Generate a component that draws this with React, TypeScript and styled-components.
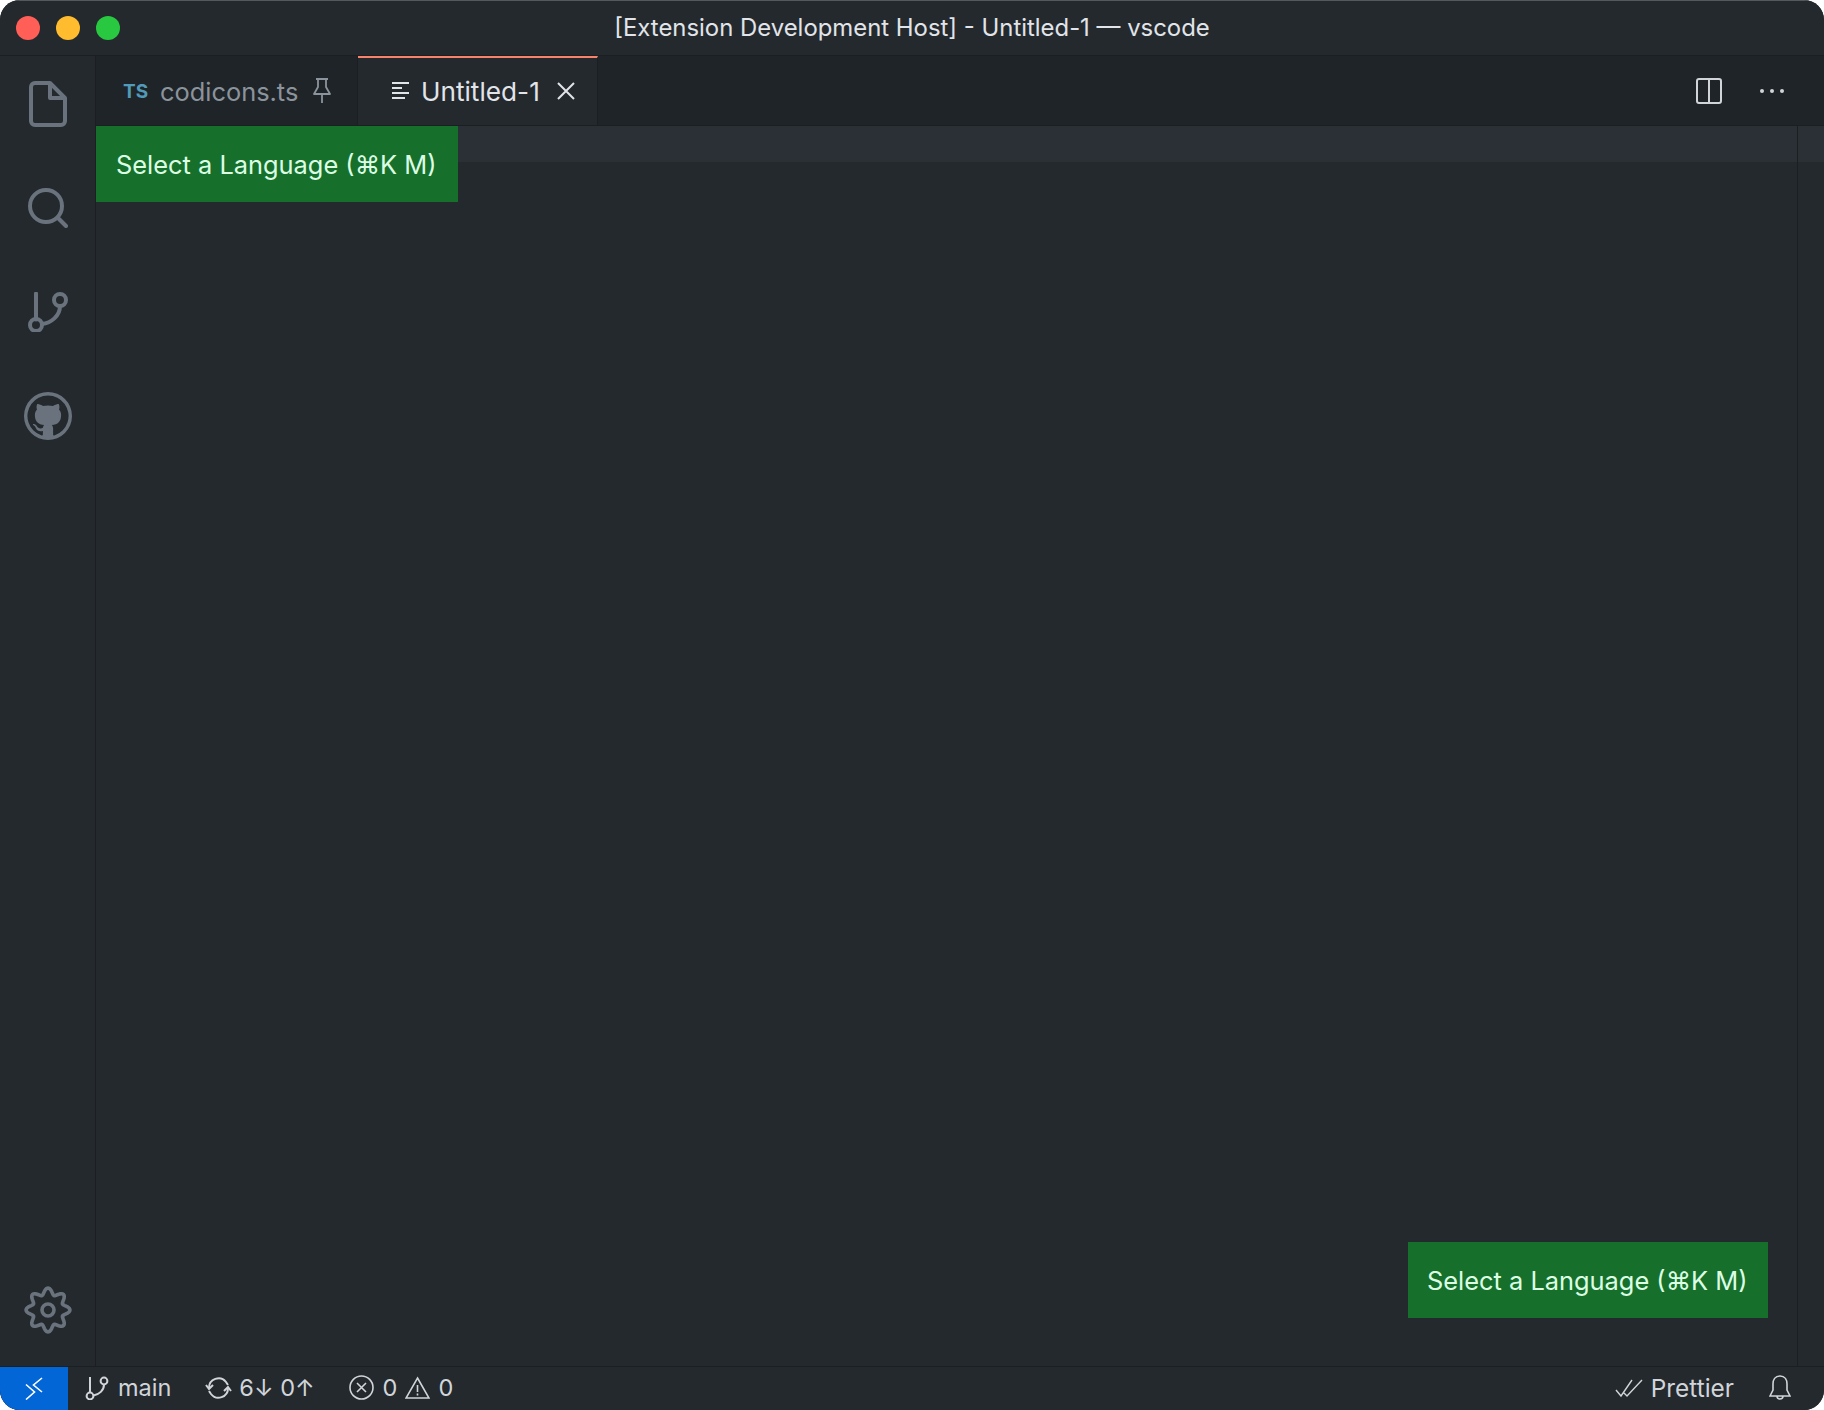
import styled, { createGlobalStyle } from "styled-components";
import { VscGithub } from "react-icons/vsc";

const GlobalStyle = createGlobalStyle`
  html, body {
    margin: 0;
    padding: 0;
    background: #fff;
  }
  * {
    box-sizing: border-box;
  }
`;

const Window = styled.div`
  position: relative;
  width: 1824px;
  height: 1410px;
  display: flex;
  flex-direction: column;
  overflow: hidden;
  border-radius: 20px;
  background: #24292e;
  font-family: Inter, "Noto Sans", "DejaVu Sans", sans-serif;
`;

const TitleBar = styled.div`
  height: 56px;
  flex: none;
  display: grid;
  grid-template-columns: 1fr auto 1fr;
  align-items: center;
  border-top: 1px solid #55595d;
  border-bottom: 1px solid #1b1f23;
  background: #24292e;
`;

const Lights = styled.div`
  display: flex;
  gap: 16px;
  padding-left: 16px;
`;

const Light = styled.span<{ color: string }>`
  width: 24px;
  height: 24px;
  border-radius: 50%;
  background: ${({ color }) => color};
`;

const Title = styled.div`
  font-size: 23.9px;
  color: #e1e4e8;
  white-space: nowrap;
  padding-bottom: 2px;
`;

const Main = styled.div`
  flex: 1;
  display: flex;
  min-height: 0;
`;

const ActivityBar = styled.div`
  width: 96px;
  flex: none;
  display: flex;
  flex-direction: column;
  align-items: center;
  gap: 56px;
  padding: 24px 0 32px;
  border-right: 1px solid #1b1f23;
  background: #24292e;
`;

const ActivityIcon = styled.div<{ $bottom?: boolean }>`
  width: 48px;
  height: 48px;
  display: flex;
  align-items: center;
  justify-content: center;
  color: #6a737d;
  margin-top: ${({ $bottom }) => ($bottom ? "auto" : "0")};
`;

const Content = styled.div`
  position: relative;
  flex: 1;
  min-width: 0;
  display: flex;
  flex-direction: column;
`;

const TabBar = styled.div`
  height: 70px;
  flex: none;
  display: flex;
  align-items: stretch;
  background: #1f2428;
  border-bottom: 1px solid #1b1f23;
`;

const Tab = styled.div<{ $active?: boolean }>`
  display: flex;
  align-items: center;
  height: 69px;
  padding-bottom: 1px;
  border-right: 1px solid #1b1f23;
  border-top: 2px solid ${({ $active }) => ($active ? "#f9826c" : "transparent")};
  background: ${({ $active }) => ($active ? "#24292e" : "#1f2428")};
  color: ${({ $active }) => ($active ? "#e1e4e8" : "#8b939c")};
  white-space: nowrap;
`;

const FirstTab = styled(Tab)`
  width: 262px;
  padding-left: 27px;
  font-size: 25.4px;
`;

const SecondTab = styled(Tab)`
  width: 240px;
  padding-left: 34px;
  font-size: 26.2px;
`;

const TsBadge = styled.span`
  width: 37px;
  font-size: 19px;
  font-weight: 700;
  color: #519aba;
`;

const TabName = styled.span<{ $gap: number }>`
  margin-right: ${({ $gap }) => $gap}px;
`;

const LinesIcon = styled.svg`
  margin-right: 11px;
`;

const TabActions = styled.div`
  margin-left: auto;
  display: flex;
  align-items: center;
  gap: 38px;
  padding-right: 40px;
`;

const Editor = styled.div`
  position: relative;
  flex: 1;
  display: flex;
  flex-direction: column;
  background: #24292e;
`;

const LineHighlight = styled.div`
  height: 36px;
  flex: none;
  background: #2b3036;
`;

const Ruler = styled.div`
  position: absolute;
  top: 0;
  bottom: 0;
  right: 26px;
  width: 1px;
  background: #1b1f23;
`;

const Callout = styled.div`
  position: absolute;
  height: 76px;
  display: flex;
  align-items: center;
  padding-left: 20px;
  background: #176f2c;
  color: #dcffe4;
  font-size: 25.4px;
  white-space: nowrap;
`;

const TopCallout = styled(Callout)`
  top: 0;
  left: 0;
  width: 362px;
`;

const BottomCallout = styled(Callout)`
  right: 56px;
  bottom: 48px;
  width: 360px;
  padding-left: 19px;
`;

const StatusBar = styled.div`
  height: 44px;
  flex: none;
  display: flex;
  align-items: center;
  border-top: 1px solid #1b1f23;
  background: #24292e;
  color: #d1d5da;
  font-size: 23.5px;
  white-space: nowrap;
`;

const RemoteButton = styled.div`
  width: 68px;
  height: 100%;
  display: flex;
  align-items: center;
  justify-content: center;
  background: #0366d6;
  margin-right: 17px;
`;

const StatusGroup = styled.div<{ $gap: number; $after: number; $size?: number }>`
  display: flex;
  align-items: center;
  gap: ${({ $gap }) => $gap}px;
  margin-right: ${({ $after }) => $after}px;
  padding-bottom: 2px;
  font-size: ${({ $size }) => ($size ? `${$size}px` : "inherit")};
`;

const Spacer = styled.div`
  flex: 1;
`;

// eight soft lobes around the centre, same wavy outline as the settings icon
function gearOutline() {
  const points: string[] = [];
  for (let i = 0; i < 240; i++) {
    const a = (i / 240) * Math.PI * 2;
    const r = 18.8 + 3.1 * Math.cos(a * 8);
    const x = 24 + r * Math.sin(a);
    const y = 24 - r * Math.cos(a);
    points.push(`${x.toFixed(2)},${y.toFixed(2)}`);
  }
  return `M${points.join("L")}Z`;
}

export default function App() {
  return (
    <Window>
      <GlobalStyle />
      <TitleBar>
        <Lights>
          <Light color="#ff5f57" />
          <Light color="#febc2e" />
          <Light color="#28c840" />
        </Lights>
        <Title>[Extension Development Host] - Untitled-1 — vscode</Title>
      </TitleBar>
      <Main>
        <ActivityBar>
          <ActivityIcon>
            <svg width="38" height="46" viewBox="0 0 38 46" fill="none" stroke="currentColor" strokeWidth="4" strokeLinejoin="round">
              <path d="M6 2h15l15 15v23a4 4 0 0 1-4 4H6a4 4 0 0 1-4-4V6a4 4 0 0 1 4-4z" />
              <path d="M21 2v15h15" />
            </svg>
          </ActivityIcon>
          <ActivityIcon>
            <svg width="40" height="40" viewBox="0 0 40 40" fill="none" stroke="currentColor" strokeWidth="4" strokeLinecap="round">
              <circle cx="18" cy="18" r="16" />
              <path d="M30 30l8 8" />
            </svg>
          </ActivityIcon>
          <ActivityIcon>
            <svg width="40" height="40" viewBox="0 0 40 40" fill="none" stroke="currentColor" strokeWidth="4" strokeLinecap="round">
              <path d="M8 1.5v26" />
              <circle cx="8" cy="33" r="6" />
              <circle cx="32" cy="8" r="6" />
              <path d="M32 14c0 10-9 17-18 18" />
            </svg>
          </ActivityIcon>
          <ActivityIcon>
            <VscGithub size={50} />
          </ActivityIcon>
          <ActivityIcon $bottom>
            <svg width="48" height="48" viewBox="0 0 48 48" fill="none" stroke="currentColor" strokeWidth="3.6">
              <path d={gearOutline()} />
              <circle cx="24" cy="24" r="6" />
            </svg>
          </ActivityIcon>
        </ActivityBar>
        <Content>
          <TabBar>
            <FirstTab>
              <TsBadge>TS</TsBadge>
              <TabName $gap={15}>codicons.ts</TabName>
              <svg width="18" height="26" viewBox="0 0 18 26" fill="none" stroke="currentColor" strokeWidth="1.8" strokeLinejoin="round">
                <path d="M3 1h12M5 1v8L1 16h16l-4-7V1M9 16v9" />
              </svg>
            </FirstTab>
            <SecondTab $active>
              <LinesIcon width="18" height="18" viewBox="0 0 18 18" stroke="currentColor" strokeWidth="2">
                <path d="M0 1h17M0 6h10M0 11h17M0 16h13" />
              </LinesIcon>
              <TabName $gap={17}>Untitled-1</TabName>
              <svg width="18" height="18" viewBox="0 0 18 18" stroke="currentColor" strokeWidth="2">
                <path d="M1 1l16 16M17 1L1 17" />
              </svg>
            </SecondTab>
            <TabActions>
              <svg width="26" height="26" viewBox="0 0 26 26" fill="none" stroke="#d1d5da" strokeWidth="2">
                <rect x="1" y="1" width="24" height="24" rx="2" />
                <path d="M13 1v24" />
              </svg>
              <svg width="24" height="4" viewBox="0 0 24 4" fill="#d1d5da">
                <circle cx="2" cy="2" r="2" />
                <circle cx="12" cy="2" r="2" />
                <circle cx="22" cy="2" r="2" />
              </svg>
            </TabActions>
          </TabBar>
          <Editor>
            <LineHighlight />
            <Ruler />
            <TopCallout>Select a Language (⌘K M)</TopCallout>
            <BottomCallout>Select a Language (⌘K M)</BottomCallout>
          </Editor>
        </Content>
      </Main>
      <StatusBar>
        <RemoteButton>
          <svg width="18" height="23" viewBox="0 0 18 23" fill="none" stroke="#fff" strokeWidth="1.6">
            <path d="M1 7.500L9.500 15 1 22.500M17 1L8.500 8 17 15" />
          </svg>
        </RemoteButton>
        <StatusGroup $gap={9} $after={34}>
          <svg width="24" height="24" viewBox="0 0 24 24" fill="none" stroke="currentColor" strokeWidth="2">
            <path d="M5 1v15" />
            <circle cx="5" cy="20" r="3.4" />
            <circle cx="19" cy="5" r="3.4" />
            <path d="M19 8.5c0 6-5 10-10.500 11" />
          </svg>
          main
        </StatusGroup>
        <StatusGroup $gap={7} $after={34}>
          <svg width="27" height="24" viewBox="0 0 27 24" fill="none" stroke="currentColor" strokeWidth="2">
            <path d="M4 12a9.500 9.500 0 0 1 17-6l2 3M23 12a9.500 9.500 0 0 1-17 6l-2-3" />
            <path d="M1 9l3 4 4-4M19 15l4-4 3 4" />
          </svg>
          6↓ 0↑
        </StatusGroup>
        <StatusGroup $gap={9} $after={8}>
          <svg width="25" height="25" viewBox="0 0 25 25" fill="none" stroke="currentColor" strokeWidth="1.6">
            <circle cx="12.500" cy="12.500" r="11.500" />
            <path d="M8 8l9 9M17 8l-9 9" />
          </svg>
          0
        </StatusGroup>
        <StatusGroup $gap={8} $after={0}>
          <svg width="25" height="24" viewBox="0 0 25 24" fill="none" stroke="currentColor" strokeWidth="1.6">
            <path d="M12.500 2L24 22H1z" />
            <path d="M12.500 9v7M12.500 17.500v2" />
          </svg>
          0
        </StatusGroup>
        <Spacer />
        <StatusGroup $gap={8} $after={35} $size={24.4}>
          <svg width="28" height="20" viewBox="0 0 28 20" fill="none" stroke="currentColor" strokeWidth="1.400">
            <path d="M1 12l5 6L17 2M9 15l3 3L27 2" />
          </svg>
          Prettier
        </StatusGroup>
        <StatusGroup $gap={0} $after={33}>
          <svg width="22" height="26" viewBox="0 0 22 26" fill="none" stroke="currentColor" strokeWidth="1.600">
            <path d="M11 1c-5 0-7 4-7 8v6l-3 6h20l-3-6V9c0-4-2-8-7-8zM8 21a3 3 0 0 0 6 0" />
          </svg>
        </StatusGroup>
      </StatusBar>
    </Window>
  );
}
